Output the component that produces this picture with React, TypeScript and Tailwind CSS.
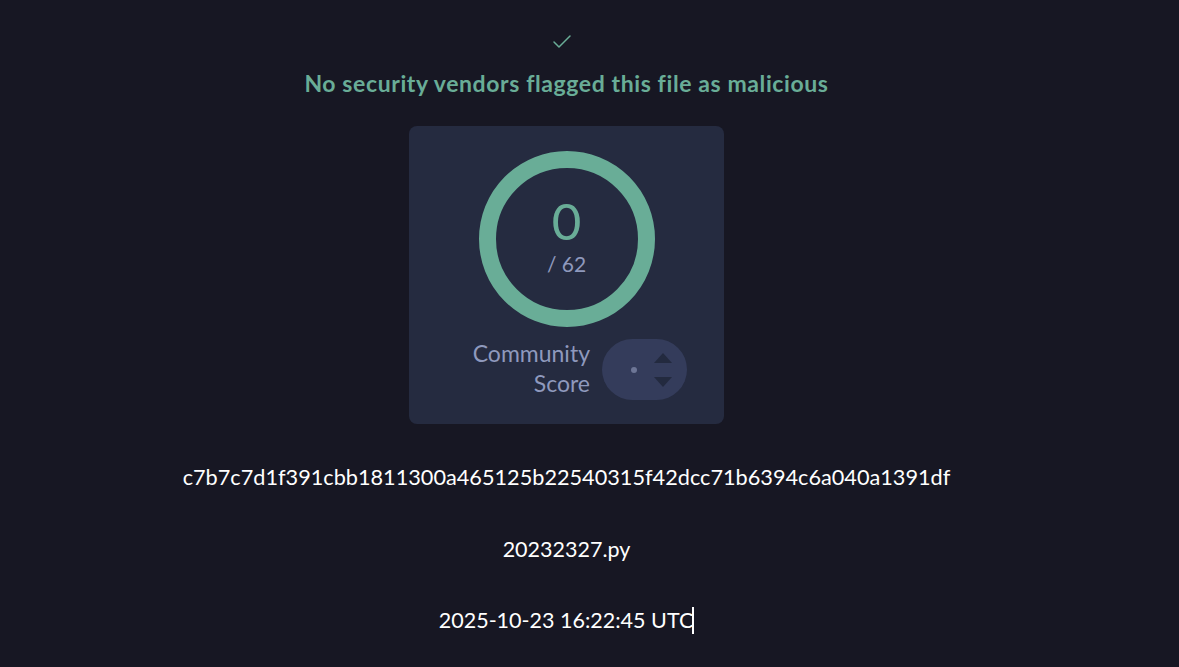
import React from 'react';
import { Check } from 'lucide-react';

const font = { fontFamily: 'Lato, "Noto Sans", sans-serif' };

const ScoreRing: React.FC<{ positives: number; total: number }> = ({ positives, total }) => (
  <div className="relative w-[176px] h-[176px]">
    <svg width="176" height="176" viewBox="0 0 176 176" className="absolute inset-0">
      <circle cx="88" cy="88" r="79.5" fill="none" stroke="#69ad97" strokeWidth="17" />
    </svg>
    <div className="absolute inset-0 flex flex-col items-center justify-center">
      <div className="text-[51px] leading-[56px] text-[#69ad97] mt-[-8px]">{positives}</div>
      <div className="text-[21px] leading-[28px] text-[#8f99bd] mt-[1px]">/ {total}</div>
    </div>
  </div>
);

const VoteToggle: React.FC = () => (
  <div className="w-[85px] h-[61px] rounded-full bg-[#343c5b] flex items-center pl-[29px] pr-[15px] justify-between">
    <div className="w-[6px] h-[6px] rounded-full bg-[#6d7696]" />
    <div className="flex flex-col gap-[14px]">
      <svg width="18" height="10" viewBox="0 0 18 10">
        <polygon points="9,0 18,10 0,10" fill="#232a3f" />
      </svg>
      <svg width="18" height="10" viewBox="0 0 18 10">
        <polygon points="0,0 18,0 9,10" fill="#232a3f" />
      </svg>
    </div>
  </div>
);

export default function App() {
  return (
    <div className="min-h-[667px] bg-[#171723]" style={font}>
      <div className="w-[1133px] flex flex-col items-center pt-[30px]">
        <Check className="w-6 h-6 text-[#69ad97] mr-[10px]" strokeWidth={1.5} />
        <h1 className="mt-[14px] text-[23px] leading-[30px] font-bold tracking-[0.6px] text-[#69ad97]">
          No security vendors flagged this file as malicious
        </h1>

        <div className="mt-[28px] w-[315px] h-[298px] rounded-lg bg-[#252b40] flex flex-col items-center pt-[25px]">
          <ScoreRing positives={0} total={62} />
          <div className="mt-[12px] w-full flex justify-end items-center gap-[12px] pr-[37px]">
            <div className="text-right text-[23px] leading-[30px] text-[#8f99bd] mt-[-3px]">
              Community
              <br />
              Score
            </div>
            <VoteToggle />
          </div>
        </div>

        <div className="mt-[38px] text-[21.7px] leading-[30px] text-white">
          c7b7c7d1f391cbb1811300a465125b22540315f42dcc71b6394c6a040a1391df
        </div>
        <div className="mt-[42px] text-[21.5px] leading-[30px] text-white">20232327.py</div>
        <div className="mt-[41px] text-[21.5px] leading-[30px] text-white flex items-center">
          2025-10-23 16:22:45 UTC
          <span className="inline-block w-[2px] h-[27px] bg-white ml-[-1px]" />
        </div>
      </div>
    </div>
  );
}
